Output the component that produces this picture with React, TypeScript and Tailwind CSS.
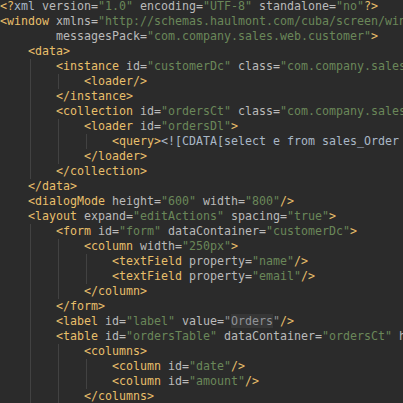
const lines: { text: string; guides?: number[] }[] = [
  { text: '<?xml version="1.0" encoding="UTF-8" standalone="no"?>' },
  { text: '<window xmlns="http://schemas.haulmont.com/cuba/screen/window.xsd"' },
  { text: '        messagesPack="com.company.sales.web.customer">', guides: [] },
  { text: '    <data>' },
  { text: '        <instance id="customerDc" class="com.company.sales.entity.Customer">' },
  { text: '            <loader/>' },
  { text: '        </instance>' },
  { text: '        <collection id="ordersCt" class="com.company.sales.entity.Order">' },
  { text: '            <loader id="ordersDl">' },
  { text: '                <query><![CDATA[select e from sales_Order e]]></query>' },
  { text: '            </loader>' },
  { text: '        </collection>' },
  { text: '    </data>' },
  { text: '    <dialogMode height="600" width="800"/>' },
  { text: '    <layout expand="editActions" spacing="true">' },
  { text: '        <form id="form" dataContainer="customerDc">' },
  { text: '            <column width="250px">' },
  { text: '                <textField property="name"/>' },
  { text: '                <textField property="email"/>' },
  { text: '            </column>' },
  { text: '        </form>' },
  { text: '        <label id="label" value="Orders"/>' },
  { text: '        <table id="ordersTable" dataContainer="ordersCt" height="100%">' },
  { text: '            <columns>' },
  { text: '                <column id="date"/>' },
  { text: '                <column id="amount"/>' },
  { text: '            </columns>' },
];

// rough xml highlighter, darcula colours
const tokenRe =
  /(<!\[CDATA\[.*)|(<\?|<\/?[A-Za-z]+|\/?>|\?>)|([A-Za-z:]+=)|("[^"]*")|(\s+)|([^\s]+)/g;

function Code({ text }: { text: string }) {
  const parts: JSX.Element[] = [];
  let m: RegExpExecArray | null;
  let i = 0;
  tokenRe.lastIndex = 0;
  while ((m = tokenRe.exec(text))) {
    const s = m[0];
    let cls = "text-[#a9b7c6]";
    if (m[2]) cls = "text-[#e8bf6a]";
    else if (m[3]) cls = "text-[#bababa]";
    else if (m[4]) cls = "text-[#6a8759]";
    if (s === '"Orders"') {
      parts.push(
        <span key={i++} className="text-[#8f9296]">
          "<span className="bg-[#363636]">Orders</span>"
        </span>
      );
      continue;
    }
    parts.push(
      <span key={i++} className={cls}>
        {s}
      </span>
    );
  }
  return <>{parts}</>;
}

function Line({ text, guides }: { text: string; guides?: number[] }) {
  const lead = text.match(/^ */)![0].length;
  const depth = Math.floor(lead / 4);
  const g = guides ?? Array.from({ length: Math.max(depth - 1, 0) }, (_, k) => k + 1);
  return (
    <div className="flex h-[15px] whitespace-pre">
      {Array.from({ length: depth }, (_, k) => (
        <span key={k} className="inline-block w-[28px] h-[15px] shrink-0">
          {g.includes(k) && (
            <span className="ml-[2px] block h-full w-px bg-[#424242]" />
          )}
        </span>
      ))}
      <span>
        <Code text={text.slice(depth * 4)} />
      </span>
    </div>
  );
}

export default function App() {
  return (
    <div className="w-[403px] h-[403px] overflow-hidden bg-[#2b2b2b] font-['DejaVu_Sans_Mono',monospace] text-[11.63px] leading-[15px] antialiased">
      <div className="-mt-px">
        {lines.map((l, i) => (
          <Line key={i} text={l.text} guides={l.guides} />
        ))}
      </div>
    </div>
  );
}
